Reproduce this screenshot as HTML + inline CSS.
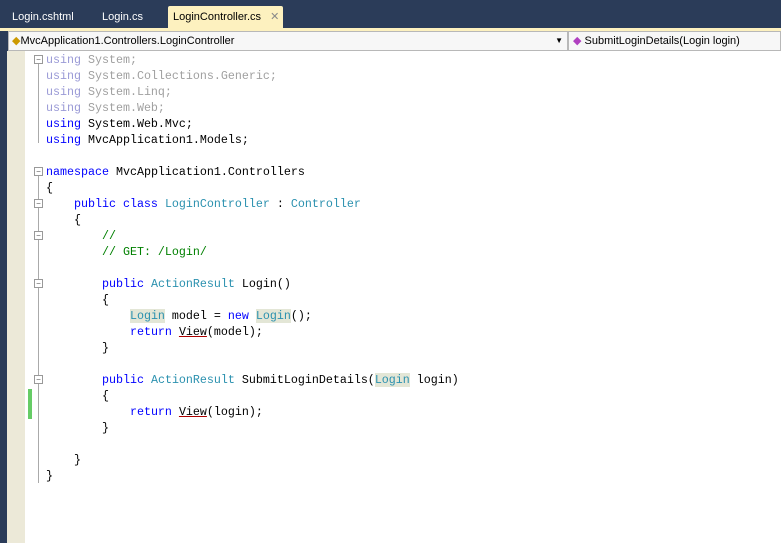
<!DOCTYPE html><html><head><style>
body{margin:0;width:781px;height:543px;overflow:hidden;background:#fff;position:relative;font-family:"Liberation Sans",sans-serif}
.top{position:absolute;left:0;top:0;width:781px;height:29px;background:#2b3c59}
.tab{position:absolute;top:6px;height:22px;font-size:11px;color:#fff;line-height:22px}
.act{background:#fdf1bf;color:#000;border-radius:2px 2px 0 0;padding:0 0 0 5px}
.goldline{position:absolute;left:0;top:28px;width:781px;height:3px;background:#fdf1bf}
.nav{position:absolute;left:0;top:31px;width:781px;height:20px;background:#2b3c59}
.box{position:absolute;top:0;height:18px;background:#f7f7f7;border:1px solid #b8b8b8;font-size:11px;line-height:18px}
.frame{position:absolute;left:0;top:51px;width:7px;height:492px;background:#2b3c59}
.gut{position:absolute;left:7px;top:51px;width:18px;height:492px;background:#ece9d8}
.code{position:absolute;left:46px;top:52px;font-family:"Liberation Mono",monospace;font-size:11.67px;line-height:16px;white-space:pre;color:#000}
.k{color:#0000ff}.g{color:#a0a0a0}.gk{color:#9a9ad6}.t{color:#2b91af}.c{color:#008000}
.hl{background:#e3e6d6}.u{text-decoration:underline;text-decoration-color:#a00}
.fb{position:absolute;left:34px;width:7px;height:7px;border:1px solid #999;background:#fff;font-size:8px;line-height:7px;text-align:center;color:#555}
.vl{position:absolute;left:38px;width:1px;background:#aaa}
</style></head><body>
<div class="top"></div>
<div class="tab" style="left:12px">Login.cshtml</div>
<div class="tab" style="left:102px">Login.cs</div>
<div class="tab act" style="left:168px;width:110px">LoginController.cs <span style="color:#8a8a8a;margin-left:6px">✕</span></div>
<div class="goldline"></div>
<div class="nav">
<div class="box" style="left:8px;width:558px"><span style="color:#c90;margin-left:3px">◆</span>MvcApplication1.Controllers.LoginController<span style="position:absolute;right:4px;font-size:8px">▼</span></div>
<div class="box" style="left:568px;width:211px"><span style="color:#b040c0;margin-left:4px">◆</span> SubmitLoginDetails(Login login)</div>
</div>
<div class="frame"></div><div class="gut"></div>
<div style="position:absolute;left:28px;top:389px;width:4px;height:30px;background:#6c6"></div>
<div class="vl" style="top:61px;height:82px"></div>
<div class="vl" style="top:173px;height:310px"></div>
<div class="fb" style="top:55px">−</div>
<div class="fb" style="top:167px">−</div>
<div class="fb" style="top:199px">−</div>
<div class="fb" style="top:231px">−</div>
<div class="fb" style="top:279px">−</div>
<div class="fb" style="top:375px">−</div>
<div class="code"><span class="gk">using</span><span class="g"> System;</span>
<span class="gk">using</span><span class="g"> System.Collections.Generic;</span>
<span class="gk">using</span><span class="g"> System.Linq;</span>
<span class="gk">using</span><span class="g"> System.Web;</span>
<span class="k">using</span> System.Web.Mvc;
<span class="k">using</span> MvcApplication1.Models;

<span class="k">namespace</span> MvcApplication1.Controllers
{
    <span class="k">public class</span> <span class="t">LoginController</span> : <span class="t">Controller</span>
    {
        <span class="c">//</span>
        <span class="c">// GET: /Login/</span>

        <span class="k">public</span> <span class="t">ActionResult</span> Login()
        {
            <span class="t hl">Login</span> model = <span class="k">new</span> <span class="t hl">Login</span>();
            <span class="k">return</span> <span class="u">View</span>(model);
        }

        <span class="k">public</span> <span class="t">ActionResult</span> SubmitLoginDetails(<span class="t hl">Login</span> login)
        {
            <span class="k">return</span> <span class="u">View</span>(login);
        }

    }
}</div>
</body></html>
